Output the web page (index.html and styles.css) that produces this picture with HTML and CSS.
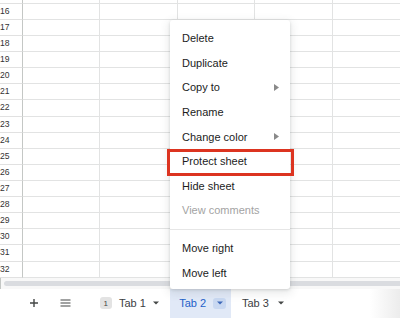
FILE: index.html
```html
<!DOCTYPE html>
<html>
<head>
<meta charset="utf-8">
<link rel="stylesheet" href="styles.css">
</head>
<body>
<div class="app">
  <div class="grid">
    <div class="row"><div class="rh"></div><div class="c"></div><div class="c"></div><div class="c"></div><div class="c"></div><div class="c"></div></div>
    <div class="row"><div class="rh">16</div><div class="c"></div><div class="c"></div><div class="c"></div><div class="c"></div><div class="c"></div></div>
    <div class="row"><div class="rh">17</div><div class="c"></div><div class="c"></div><div class="c"></div><div class="c"></div><div class="c"></div></div>
    <div class="row"><div class="rh">18</div><div class="c"></div><div class="c"></div><div class="c"></div><div class="c"></div><div class="c"></div></div>
    <div class="row"><div class="rh">19</div><div class="c"></div><div class="c"></div><div class="c"></div><div class="c"></div><div class="c"></div></div>
    <div class="row"><div class="rh">20</div><div class="c"></div><div class="c"></div><div class="c"></div><div class="c"></div><div class="c"></div></div>
    <div class="row"><div class="rh">21</div><div class="c"></div><div class="c"></div><div class="c"></div><div class="c"></div><div class="c"></div></div>
    <div class="row"><div class="rh">22</div><div class="c"></div><div class="c"></div><div class="c"></div><div class="c"></div><div class="c"></div></div>
    <div class="row"><div class="rh">23</div><div class="c"></div><div class="c"></div><div class="c"></div><div class="c"></div><div class="c"></div></div>
    <div class="row"><div class="rh">24</div><div class="c"></div><div class="c"></div><div class="c"></div><div class="c"></div><div class="c"></div></div>
    <div class="row"><div class="rh">25</div><div class="c"></div><div class="c"></div><div class="c"></div><div class="c"></div><div class="c"></div></div>
    <div class="row"><div class="rh">26</div><div class="c"></div><div class="c"></div><div class="c"></div><div class="c"></div><div class="c"></div></div>
    <div class="row"><div class="rh">27</div><div class="c"></div><div class="c"></div><div class="c"></div><div class="c"></div><div class="c"></div></div>
    <div class="row"><div class="rh">28</div><div class="c"></div><div class="c"></div><div class="c"></div><div class="c"></div><div class="c"></div></div>
    <div class="row"><div class="rh">29</div><div class="c"></div><div class="c"></div><div class="c"></div><div class="c"></div><div class="c"></div></div>
    <div class="row"><div class="rh">30</div><div class="c"></div><div class="c"></div><div class="c"></div><div class="c"></div><div class="c"></div></div>
    <div class="row"><div class="rh">31</div><div class="c"></div><div class="c"></div><div class="c"></div><div class="c"></div><div class="c"></div></div>
    <div class="row"><div class="rh">32</div><div class="c"></div><div class="c"></div><div class="c"></div><div class="c"></div><div class="c"></div></div>
  </div>
  <div class="track">
    <div class="track-head"></div>
    <div class="track-body"><div class="thumb"></div></div>
  </div>
  <div class="tabbar">
    <div class="icon-btn add">
      <svg width="10" height="10" viewBox="0 0 10 10"><path d="M5 1v8M1 5h8" stroke="#444746" stroke-width="1.4" fill="none"/></svg>
    </div>
    <div class="icon-btn list">
      <svg width="11" height="8" viewBox="0 0 11 8"><path d="M0.5 1h10M0.5 4h10M0.5 7h10" stroke="#444746" stroke-width="1.2" fill="none"/></svg>
    </div>
    <div class="tab tab1">
      <span class="badge">1</span>
      <span class="tab-label">Tab 1</span>
      <svg class="caret" width="6" height="4" viewBox="0 0 6 4"><path d="M0 0.5h6L3 3.5z" fill="#444746"/></svg>
    </div>
    <div class="tab tab2">
      <span class="tab-label">Tab 2</span>
      <span class="caret-btn"><svg width="6" height="4" viewBox="0 0 6 4"><path d="M0 0.5h6L3 3.5z" fill="#3d67b8"/></svg></span>
    </div>
    <div class="tab tab3">
      <span class="tab-label">Tab 3</span>
      <svg class="caret" width="6" height="4" viewBox="0 0 6 4"><path d="M0 0.5h6L3 3.5z" fill="#444746"/></svg>
    </div>
  </div>
  <div class="menu">
    <div class="item">Delete</div>
    <div class="item">Duplicate</div>
    <div class="item sub">Copy to<svg class="arrow" width="5" height="7" viewBox="0 0 5 7"><path d="M0 0l5 3.5L0 7z" fill="#8a8a8a"/></svg></div>
    <div class="item">Rename</div>
    <div class="item sub">Change color<svg class="arrow" width="5" height="7" viewBox="0 0 5 7"><path d="M0 0l5 3.5L0 7z" fill="#8a8a8a"/></svg></div>
    <div class="item">Protect sheet</div>
    <div class="item">Hide sheet</div>
    <div class="item disabled">View comments</div>
    <div class="divider"></div>
    <div class="item">Move right</div>
    <div class="item">Move left</div>
    <div class="highlight"></div>
  </div>
</div>
</body>
</html>
```

FILE: styles.css
```css
* { box-sizing: border-box; }
html, body {
  margin: 0;
  padding: 0;
  width: 400px;
  height: 318px;
  overflow: hidden;
  background: #fff;
  font-family: "Liberation Sans", Arial, sans-serif;
}
.app {
  position: relative;
  width: 400px;
  height: 318px;
  overflow: hidden;
  display: flex;
  flex-direction: column;
}
.grid {
  margin-top: -12.3px;
  display: flex;
  flex-direction: column;
}
.row {
  display: grid;
  grid-template-columns: 22.5px repeat(5, 77.5px);
  height: 16.12px;
  flex: none;
}
.rh {
  border-right: 1px solid #c4c7c5;
  border-bottom: 1px solid #e1e1e1;
  font-size: 8.6px;
  color: #333;
  text-align: right;
  padding-right: 13.8px;
  line-height: 15px;
  white-space: nowrap;
}
.c {
  border-right: 1px solid #e2e3e3;
  border-bottom: 1px solid #e2e3e3;
}
.track {
  display: flex;
  height: 11.2px;
  flex: none;
  background: #f8f8f8;
}
.track-head {
  width: 22.5px;
  background: #f1f1f1;
  border-right: 1px solid #c4c7c5;
}
.track-body {
  flex: 1;
  padding: 3.2px 0 0 2.5px;
}
.thumb {
  height: 5.6px;
  width: 420px;
  background: #dadce0;
  border-radius: 3px;
}
.tabbar {
  flex: 1;
  display: flex;
  align-items: stretch;
  background: linear-gradient(to right, #fff 0, #fff 370px, #ececec 400px);
  color: #3c4043;
  font-size: 11px;
}
.icon-btn {
  width: 20px;
  display: flex;
  align-items: center;
  justify-content: center;
}
.add { margin-left: 24px; }
.list { margin-left: 11.7px; }
.tab {
  display: flex;
  align-items: center;
}
.tab1 { margin-left: 24.3px; }
.badge {
  width: 11.7px;
  height: 12px;
  background: #e3e3e3;
  border-radius: 3px;
  font-size: 8px;
  color: #444;
  display: flex;
  align-items: center;
  justify-content: center;
}
.tab1 .tab-label { margin-left: 7.3px; }
.tab1 .caret { margin-left: 7px; }
.tab2 {
  margin-left: 11.3px;
  width: 60.7px;
  padding-left: 9px;
  background: #e1e9f7;
  color: #2461c9;
}
.caret-btn {
  margin-left: 7px;
  width: 13px;
  height: 11px;
  border-radius: 3px;
  background: #c9d8f1;
  display: flex;
  align-items: center;
  justify-content: center;
}
.tab3 { margin-left: 11px; }
.tab3 .caret { margin-left: 9px; }
.menu {
  position: absolute;
  left: 170px;
  top: 20px;
  width: 120px;
  height: 269px;
  padding: 6px 0 4px;
  background: #fff;
  border-radius: 3px;
  box-shadow: 0 1px 3px rgba(60, 64, 67, 0.18), 0 3px 8px 2px rgba(60, 64, 67, 0.1);
  font-size: 11px;
  color: #1c1c1c;
}
.item {
  height: 24.6px;
  padding-left: 12px;
  display: flex;
  align-items: center;
  justify-content: space-between;
  padding-right: 11px;
  white-space: nowrap;
}
.item.disabled { color: #a3a3a3; }
.divider {
  height: 1px;
  margin: 6px 0;
  background: #e6e6e6;
}
.highlight {
  position: absolute;
  left: -3px;
  top: 129px;
  width: 127px;
  height: 27px;
  border: 3px solid #dc3420;
}
```
